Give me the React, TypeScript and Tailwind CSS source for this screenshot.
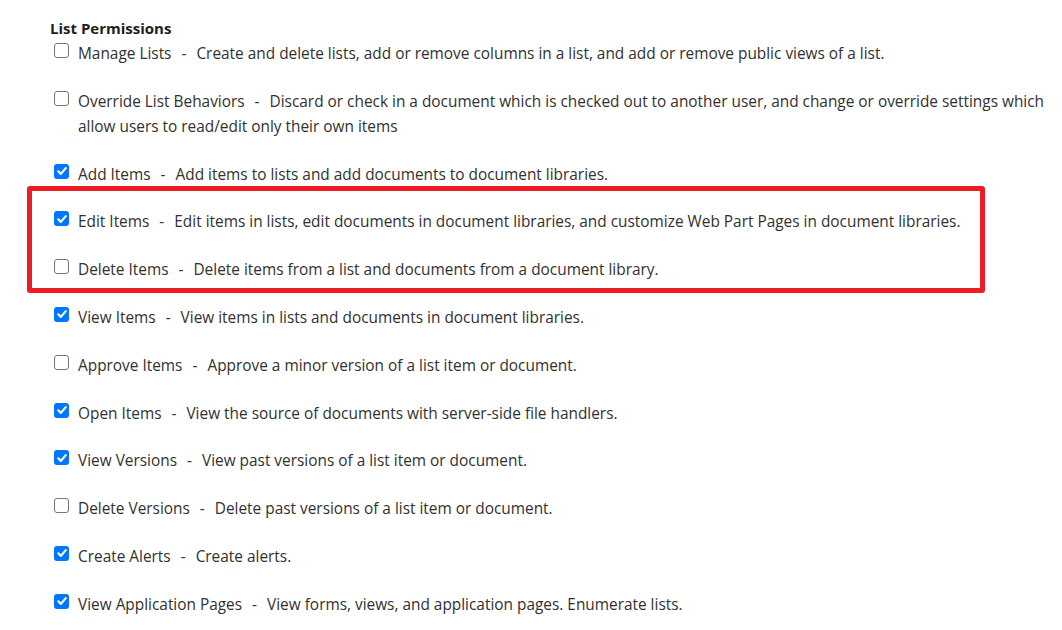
import React from "react";

type Perm = { name: string; desc: string; checked: boolean };

const perms: Perm[] = [
  { name: "Manage Lists", desc: "Create and delete lists, add or remove columns in a list, and add or remove public views of a list.", checked: false },
  { name: "Override List Behaviors", desc: "Discard or check in a document which is checked out to another user, and change or override settings which allow users to read/edit only their own items", checked: false },
  { name: "Add Items", desc: "Add items to lists and add documents to document libraries.", checked: true },
  { name: "Edit Items", desc: "Edit items in lists, edit documents in document libraries, and customize Web Part Pages in document libraries.", checked: true },
  { name: "Delete Items", desc: "Delete items from a list and documents from a document library.", checked: false },
  { name: "View Items", desc: "View items in lists and documents in document libraries.", checked: true },
  { name: "Approve Items", desc: "Approve a minor version of a list item or document.", checked: false },
  { name: "Open Items", desc: "View the source of documents with server-side file handlers.", checked: true },
  { name: "View Versions", desc: "View past versions of a list item or document.", checked: true },
  { name: "Delete Versions", desc: "Delete past versions of a list item or document.", checked: false },
  { name: "Create Alerts", desc: "Create alerts.", checked: true },
  { name: "View Application Pages", desc: "View forms, views, and application pages. Enumerate lists.", checked: true },
];

function Box({ checked }: { checked: boolean }) {
  if (checked) {
    return (
      <span className="mt-[2px] flex h-[15px] w-[15px] shrink-0 items-center justify-center rounded-[3px] bg-[#0075ff]">
        <svg width="12" height="12" viewBox="0 0 12 12" fill="none">
          <path d="M2.3 6.3 L4.9 8.9 L9.8 3.1" stroke="white" strokeWidth="2.2" strokeLinecap="round" strokeLinejoin="round" />
        </svg>
      </span>
    );
  }
  return <span className="mt-[2px] h-[15px] w-[15px] shrink-0 rounded-[3px] border border-[#767676] bg-white" />;
}

function Row({ p }: { p: Perm }) {
  return (
    <div className="flex items-start gap-[9px] pl-[54px]">
      <Box checked={p.checked} />
      <p>
        {p.name}
        <span className="px-[2px]">{"\u00a0 -\u00a0 "}</span>
        {p.desc}
      </p>
    </div>
  );
}

export default function App() {
  const before = perms.slice(0, 3);
  const boxed = perms.slice(3, 5);
  const after = perms.slice(5);
  return (
    <div className="h-[630px] w-[1062px] overflow-hidden bg-white font-['Open_Sans',sans-serif] text-[15.4px] leading-[25px] text-[#323130]">
      <div className="pt-[16px] pr-[16px]">
        <div className="pl-[50px] text-[15px] font-bold text-[#201f1e]">List Permissions</div>
        <div className="flex flex-col gap-[22.8px]">
          {before.map((p) => (
            <Row key={p.name} p={p} />
          ))}
          <div className="relative flex flex-col gap-[22.8px]">
            <div className="pointer-events-none absolute top-[-23.5px] bottom-[-10.5px] left-[27px] w-[958px] rounded-[3px] border-[5px] border-[#ee1c25]" />
            {boxed.map((p) => (
              <Row key={p.name} p={p} />
            ))}
          </div>
          {after.map((p) => (
            <Row key={p.name} p={p} />
          ))}
        </div>
      </div>
    </div>
  );
}
